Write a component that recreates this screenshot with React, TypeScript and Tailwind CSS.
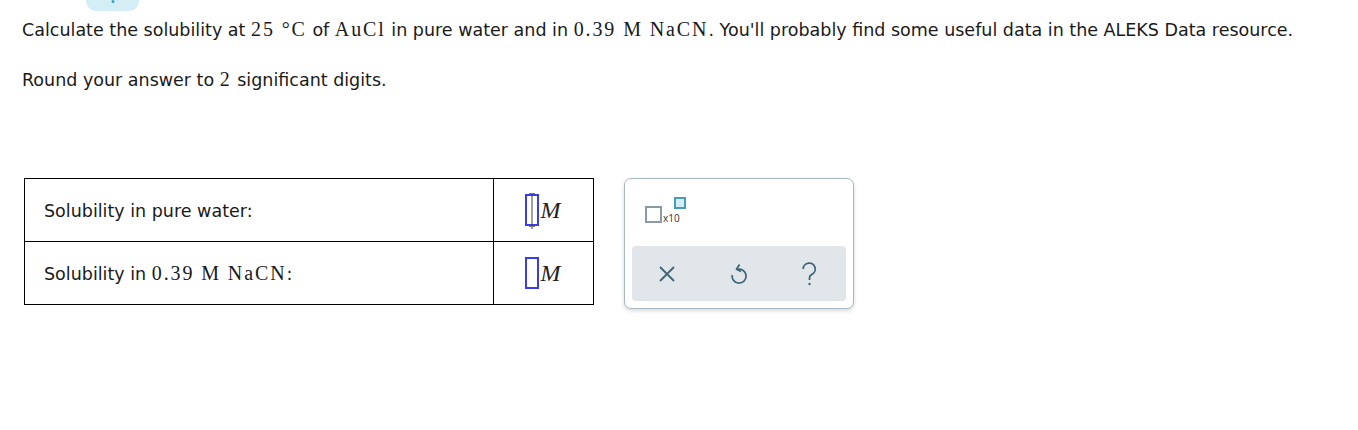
import React from "react";

const sans = { fontFamily: '"DejaVu Sans", Verdana, sans-serif' };
const serif = { fontFamily: '"Liberation Serif", "Times New Roman", serif' };

function Mth({ children }: { children: React.ReactNode }) {
  return (
    <span className="text-[20px] tracking-[1.9px]" style={serif}>
      {children}
    </span>
  );
}

function AnswerBox({ focused }: { focused?: boolean }) {
  return (
    <div className="flex items-center">
      <div className="relative h-[32px] w-[14px] border-2 border-[#3b3bf0] bg-white">
        {focused && (
          <>
            <div className="absolute left-1/2 top-[-3px] h-[36px] w-px -translate-x-1/2 bg-[#444]" />
            <div className="absolute left-1/2 top-[-3px] h-px w-[6px] -translate-x-1/2 bg-[#777]" />
            <div className="absolute bottom-[-3px] left-1/2 h-px w-[6px] -translate-x-1/2 bg-[#777]" />
          </>
        )}
      </div>
      <span className="ml-[2px] text-[24px] italic leading-none text-[#222]" style={serif}>
        M
      </span>
    </div>
  );
}

export default function App() {
  return (
    <div className="relative h-[430px] w-[1358px] bg-white text-[17.5px] text-[#1a1a1a]" style={sans}>
      <div className="absolute left-[86px] top-0 h-[11px] w-[53px] rounded-b-[10px] bg-[#d4eef5]">
        <div className="absolute left-1/2 top-0 h-[3px] w-[3px] -translate-x-1/2 rounded-full bg-[#3aa0d0]" />
      </div>

      <div className="pl-[22px] pt-[16px]">
        <p className="whitespace-nowrap leading-[26px]">
          Calculate the solubility at <Mth>25 °C</Mth> of <Mth>AuCl</Mth> in pure water and in{" "}
          <Mth>0.39 M NaCN</Mth>. You'll probably find some useful data in the ALEKS Data resource.
        </p>
        <p className="mt-[23px] leading-[26px]">
          Round your answer to <Mth>2</Mth> significant digits.
        </p>
      </div>

      <div className="mt-[85px] flex items-start pl-[24px]">
        <table className="w-[570px] border-collapse">
          <tbody>
            <tr className="h-[63px]">
              <td className="border border-black pl-[19px] pt-[2px]">Solubility in pure water:</td>
              <td className="w-[100px] border border-black">
                <div className="flex justify-center pl-[4px] pr-[6px]">
                  <AnswerBox focused />
                </div>
              </td>
            </tr>
            <tr className="h-[63px]">
              <td className="border border-black pl-[19px]">
                Solubility in <Mth>0.39 M NaCN</Mth>:
              </td>
              <td className="border border-black">
                <div className="flex justify-center pl-[4px] pr-[6px]">
                  <AnswerBox />
                </div>
              </td>
            </tr>
          </tbody>
        </table>

        <div className="ml-[30px] flex h-[131px] w-[230px] flex-col rounded-[7px] border border-[#a9b8c0] bg-white px-[7px] pb-[6px] shadow-[0_2px_4px_rgba(0,0,0,0.15)]">
          <div className="flex h-[67px] items-start pl-[13px] pt-[18px]">
            <div className="relative flex items-end">
              <div className="mt-[9px] h-[17px] w-[17px] border-2 border-[#8a9ba3] bg-white" />
              <span className="ml-px text-[10px] leading-[10px] text-[#333]" style={{ fontFamily: '"Open Sans", Arial, sans-serif' }}>
                x10
              </span>
              <div className="absolute left-[29px] top-0 h-[12px] w-[12px] border-2 border-[#4a9cb3] bg-[#d5eef6]" />
            </div>
          </div>
          <div className="flex h-[55px] items-center rounded-[4px] bg-[#e0e6e9] text-[#3f6676]">
            <svg width="18" height="18" viewBox="0 0 18 18" className="ml-[26px]">
              <path d="M2 2 L16 16 M16 2 L2 16" stroke="#3f6676" strokeWidth="1.8" fill="none" />
            </svg>
            <svg width="18" height="22" viewBox="0 0 18 22" className="ml-[54px]">
              <path d="M7 6.5 A7 7 0 1 1 2.2 12" stroke="#3f6676" strokeWidth="1.8" fill="none" />
              <path d="M9.5 1.5 L6.5 6.3 L11 8.5" stroke="#3f6676" strokeWidth="1.8" fill="none" strokeLinejoin="round" />
            </svg>
            <svg width="17" height="24" viewBox="0 0 17 24" className="ml-[53px]">
              <path d="M2.2 7 A6 6 0 1 1 10.5 12.6 C9 13.4 8.5 14.4 8.5 16 L8.5 18" stroke="#3f6676" strokeWidth="1.8" fill="none" />
              <circle cx="8.5" cy="22" r="1.2" fill="#3f6676" />
            </svg>
          </div>
        </div>
      </div>
    </div>
  );
}
